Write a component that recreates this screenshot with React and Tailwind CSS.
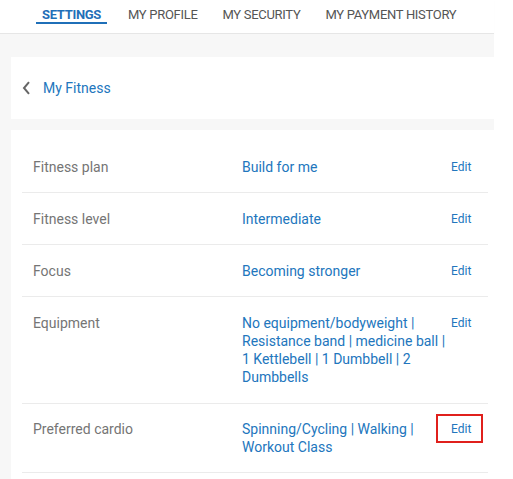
import React from "react";

const rows = [
  { label: "Fitness plan", value: "Build for me", py: "py-[16.5px]" },
  { label: "Fitness level", value: "Intermediate", py: "py-[16.5px]" },
  { label: "Focus", value: "Becoming stronger", py: "py-[16.5px]" },
  {
    label: "Equipment",
    value:
      "No equipment/bodyweight | Resistance band | medicine ball | 1 Kettlebell | 1 Dumbbell | 2 Dumbbells",
    py: "py-[17px]",
  },
  {
    label: "Preferred cardio",
    value: "Spinning/Cycling | Walking | Workout Class",
    highlight: true,
    py: "py-[16px]",
  },
];

export default function App() {
  return (
    <div className="w-[513px] h-[479px] bg-white overflow-hidden font-['Roboto',sans-serif]">
      <div className="w-[494px]">
        <nav className="h-[34px] border-b border-[#e6e6e6] bg-white flex items-start pl-[36px] pt-[7px] whitespace-nowrap shadow-[0_1px_1px_rgba(0,0,0,0.03)]">
          <div className="w-[71px] flex justify-center border-b-2 border-[#1f6fb8] text-[13px] leading-[15px] font-bold text-[#1f6fb8] tracking-[-0.3px]">
            SETTINGS
          </div>
          <div className="ml-[21px] text-[13px] leading-[15px] text-[#555] tracking-[-0.3px]">
            MY PROFILE
          </div>
          <div className="ml-[25px] text-[13px] leading-[15px] text-[#555] tracking-[-0.3px]">
            MY SECURITY
          </div>
          <div className="ml-[25px] text-[13px] leading-[15px] text-[#555] tracking-[-0.3px]">
            MY PAYMENT HISTORY
          </div>
        </nav>
        <div className="bg-[#f7f7f7] pl-[11px] pt-[23px] h-[445px]">
          <div className="bg-white h-[62px] flex items-center pl-[11px] gap-[12px]">
            <svg width="9" height="14" viewBox="0 0 9 14" className="shrink-0">
              <path d="M7 1.2 L2 7 L7 12.8" fill="none" stroke="#666" strokeWidth="2" />
            </svg>
            <span className="text-[14px] leading-[16px] text-[#2276bd]">My Fitness</span>
          </div>
          <div className="bg-white mt-[11px] pl-[11px] pr-[6px] pt-[11px] h-[400px]">
            {rows.map((r) => (
              <div
                key={r.label}
                className={`flex items-start border-b border-[#ebebeb] pl-[11px] text-[14px] leading-[18px] ${r.py}`}
              >
                <div className="w-[209px] shrink-0 text-[#757575]">{r.label}</div>
                <div className="w-[204px] shrink-0 text-[#2276bd]">{r.value}</div>
                {r.highlight ? (
                  <div className="-ml-[10px] -mt-[6px] border-2 border-[#e0201c] w-[47px] h-[29px] pl-[13px] pt-[4px] text-[12px] leading-[18px] text-[#2276bd]">
                    Edit
                  </div>
                ) : (
                  <div className="ml-[5px] text-[12px] leading-[18px] text-[#2276bd]">Edit</div>
                )}
              </div>
            ))}
          </div>
        </div>
      </div>
    </div>
  );
}
